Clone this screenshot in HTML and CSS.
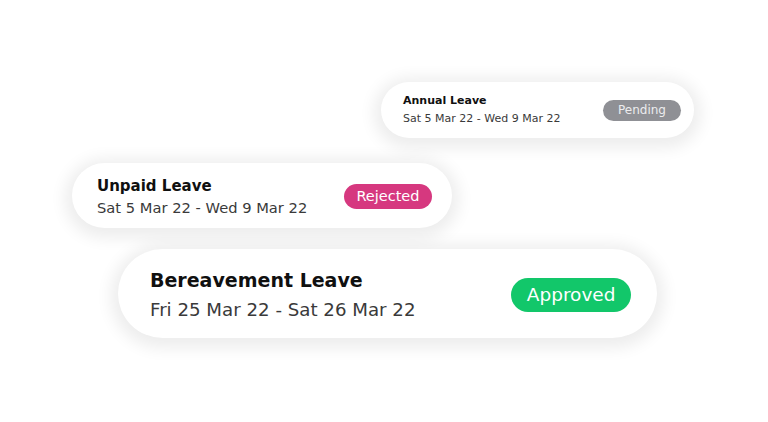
FILE: index.html
```html
<!DOCTYPE html>
<html lang="en">
<head>
    <meta charset="UTF-8">
    <meta name="viewport" content="width=device-width, initial-scale=1.0">
    <title>Leave requests</title>
    <link rel="stylesheet" href="styles.css">
</head>
<body>
    <div class="leave-stack">
        <div class="leave-card leave-card--sm">
            <div class="leave-info">
                <p class="leave-type">Annual Leave</p>
                <p class="leave-dates">Sat 5 Mar 22 - Wed 9 Mar 22</p>
            </div>
            <span class="status status--pending">Pending</span>
        </div>

        <div class="leave-card leave-card--md">
            <div class="leave-info">
                <p class="leave-type">Unpaid Leave</p>
                <p class="leave-dates">Sat 5 Mar 22 - Wed 9 Mar 22</p>
            </div>
            <span class="status status--rejected">Rejected</span>
        </div>

        <div class="leave-card leave-card--lg">
            <div class="leave-info">
                <p class="leave-type">Bereavement Leave</p>
                <p class="leave-dates">Fri 25 Mar 22 - Sat 26 Mar 22</p>
            </div>
            <span class="status status--approved">Approved</span>
        </div>
    </div>
</body>
</html>
```

FILE: styles.css
```css
html, body {
    height: 100%;
}
body {
    margin: 0;
    background-color: #fff;
    font-family: "DejaVu Sans", sans-serif;
    color: #111;
}
.leave-stack {
    display: flex;
    flex-direction: column;
    align-items: flex-start;
    min-height: 100%;
    box-sizing: border-box;
    padding-top: 82px;
}
.leave-card {
    display: flex;
    align-items: center;
    justify-content: space-between;
    box-sizing: border-box;
    background: #fff;
    border-radius: 999px;
    box-shadow: 0 3px 16px 7px rgba(0, 0, 0, 0.075);
}
.leave-info p {
    margin: 0;
}
.leave-type {
    font-weight: bold;
    color: #101010;
}
.leave-dates {
    color: #3a3a3a;
}
.status {
    border-radius: 999px;
    color: #fff;
    white-space: nowrap;
}

/* small card */
.leave-card--sm {
    width: 313px;
    height: 56px;
    margin-left: 381px;
    padding: 0 13px 0 22px;
}
.leave-card--sm .leave-type {
    font-size: 11px;
    line-height: 18px;
}
.leave-card--sm .leave-dates {
    font-size: 11px;
    line-height: 18px;
}
.leave-card--sm .status {
    font-size: 12px;
    height: 21px;
    line-height: 21px;
    padding: 0 15px;
}

/* medium card */
.leave-card--md {
    width: 380px;
    height: 65px;
    margin-top: 25px;
    margin-left: 72px;
    padding: 2px 20px 0 25px;
}
.leave-card--md .leave-type {
    font-size: 15px;
    line-height: 21px;
}
.leave-card--md .leave-dates {
    font-size: 14.7px;
    line-height: 21px;
}
.leave-card--md .status {
    font-size: 14.5px;
    height: 25px;
    line-height: 25px;
    padding: 0 12.5px;
}

/* large card */
.leave-card--lg {
    width: 539px;
    height: 89px;
    margin-top: 21px;
    margin-left: 118px;
    padding: 2px 26px 0 32px;
}
.leave-card--lg .leave-type {
    font-size: 19px;
    line-height: 30px;
}
.leave-card--lg .leave-dates {
    font-size: 18.2px;
    line-height: 30px;
}
.leave-card--lg .status {
    font-size: 18.5px;
    height: 34px;
    line-height: 34px;
    padding: 0 15.5px;
}

.status--pending {
    background-color: #8f9095;
    color: #ececee;
}
.status--rejected {
    background-color: #d6387f;
}
.status--approved {
    background-color: #12c76a;
}
```
